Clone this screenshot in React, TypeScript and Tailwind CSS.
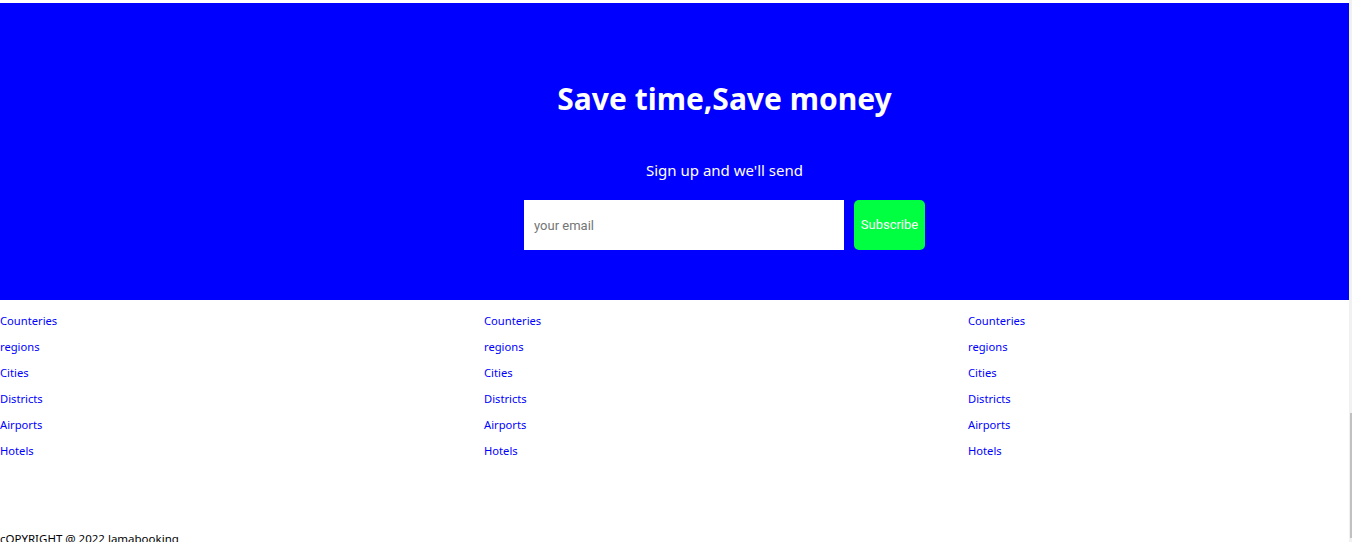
const columns = [0, 1, 2];
const links = ["Counteries", "regions", "Cities", "Districts", "Airports", "Hotels"];

export default function App() {
  return (
    <div className="relative w-[1352px] h-[542px] overflow-hidden bg-white font-['Noto_Sans',sans-serif]">
      <div className="w-[1449px] pt-[3px]">
        {/* Mail list */}
        <section className="h-[297px] bg-[#0000ff] text-white flex flex-col items-center">
          <h1 className="mt-[76px] text-[30px] font-bold leading-[40px]">Save time,Save money</h1>
          <p className="mt-[41px] text-[15px] leading-[20px]">Sign up and we'll send</p>
          <div className="mt-[20px] flex gap-[10px]">
            <input
              type="text"
              placeholder="your email"
              className="w-[320px] h-[50px] px-[10px] bg-white text-[13px] text-black placeholder:text-[#757575] font-['Roboto',sans-serif] outline-none"
            />
            <button className="w-[71px] h-[50px] rounded-[5px] bg-[#00ff40] text-white text-[13px] font-['Roboto',sans-serif]">
              Subscribe
            </button>
          </div>
        </section>

        {/* Footer lists */}
        <div className="flex pt-[8px]">
          {columns.map((c) => (
            <ul key={c} className="w-[484px] shrink-0 flex flex-col">
              {links.map((l) => (
                <li key={l} className="text-[11.2px] leading-[26px] text-[#0000ff]">
                  {l}
                </li>
              ))}
            </ul>
          ))}
        </div>

        <div className="mt-[66px] text-[11.5px] leading-[18px] text-black">cOPYRIGHT @ 2022 lamabooking</div>
      </div>

      {/* scrollbar */}
      <div className="absolute right-0 top-0 w-[3px] h-full bg-[#f1f1f1]">
        <div className="absolute left-[1px] top-[413px] w-[2px] h-[125px] bg-[#c1c1c1]" />
      </div>
    </div>
  );
}
